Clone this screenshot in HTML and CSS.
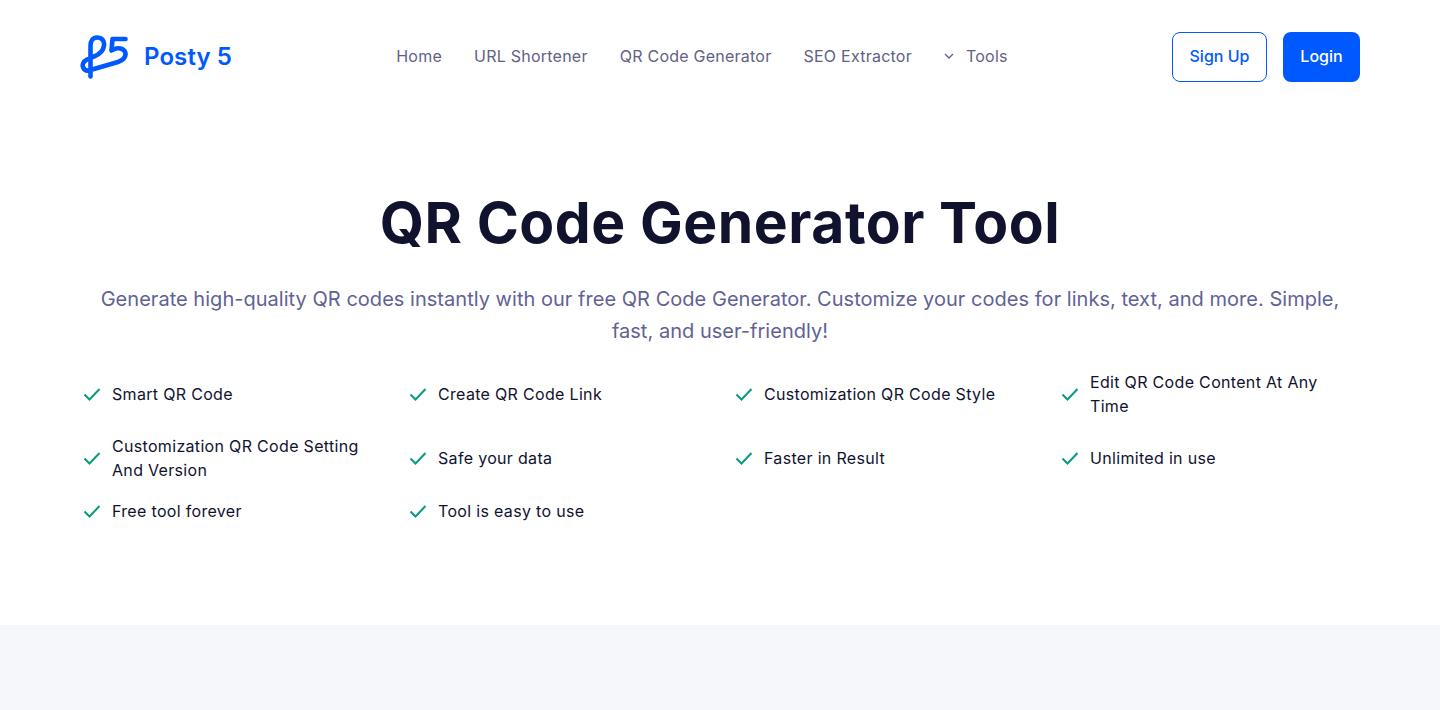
FILE: index.html
```html
<!DOCTYPE html>
<html lang="en">
<head>
    <meta charset="UTF-8">
    <title>QR Code Generator Tool - Posty 5</title>
    <link rel="stylesheet" href="styles.css">
</head>
<body>
    <header class="header">
        <a class="logo" href="#">
            <svg class="logo-mark" width="48" height="44" viewBox="0 0 48 44" fill="none" stroke="#0059ff" stroke-width="4.600" stroke-linecap="round" stroke-linejoin="round">
                <path d="M10.500 41.500V11C10.500 5.500 13 2.500 17 2.500C22 2.500 24.500 6 24 10.500C23.500 16 19 19.500 14 21.500L7 24.500C3 26.500 2 30 3.200 32.500C4.500 35.500 7.500 36 10.500 35L38 27C43.500 25 45.800 22 45.500 18.500C45 14.500 40.500 12.500 36 13.500L31.500 15.500L32.500 4H45.500"/>
            </svg>
            <span class="logo-text">Posty 5</span>
        </a>
        <nav class="nav">
            <a href="#">Home</a>
            <a href="#">URL Shortener</a>
            <a href="#">QR Code Generator</a>
            <a href="#">SEO Extractor</a>
            <a href="#" class="nav-tools">
                <svg width="10" height="6" viewBox="0 0 10 6" fill="none" stroke="#5f6285" stroke-width="1.300"><path d="M1 1l4 4 4-4"/></svg>
                Tools
            </a>
        </nav>
        <div class="actions">
            <a href="#" class="btn btn-outline">Sign Up</a>
            <a href="#" class="btn btn-solid">Login</a>
        </div>
    </header>

    <main class="hero">
        <h1>QR Code Generator Tool</h1>
        <p class="lead">Generate high-quality QR codes instantly with our free QR Code Generator. Customize your codes for links, text, and more. Simple, fast, and user-friendly!</p>
        <ul class="features">
            <li><svg class="check" viewBox="0 0 24 24"><path d="M4.500 12.500l5 5 10-10.500"/></svg><span>Smart QR Code</span></li>
            <li><svg class="check" viewBox="0 0 24 24"><path d="M4.500 12.500l5 5 10-10.500"/></svg><span>Create QR Code Link</span></li>
            <li><svg class="check" viewBox="0 0 24 24"><path d="M4.500 12.500l5 5 10-10.500"/></svg><span>Customization QR Code Style</span></li>
            <li><svg class="check" viewBox="0 0 24 24"><path d="M4.500 12.500l5 5 10-10.500"/></svg><span>Edit QR Code Content At Any Time</span></li>
            <li><svg class="check" viewBox="0 0 24 24"><path d="M4.500 12.500l5 5 10-10.500"/></svg><span>Customization QR Code Setting And Version</span></li>
            <li><svg class="check" viewBox="0 0 24 24"><path d="M4.500 12.500l5 5 10-10.500"/></svg><span>Safe your data</span></li>
            <li><svg class="check" viewBox="0 0 24 24"><path d="M4.500 12.500l5 5 10-10.500"/></svg><span>Faster in Result</span></li>
            <li><svg class="check" viewBox="0 0 24 24"><path d="M4.500 12.500l5 5 10-10.500"/></svg><span>Unlimited in use</span></li>
            <li><svg class="check" viewBox="0 0 24 24"><path d="M4.500 12.500l5 5 10-10.500"/></svg><span>Free tool forever</span></li>
            <li><svg class="check" viewBox="0 0 24 24"><path d="M4.500 12.500l5 5 10-10.500"/></svg><span>Tool is easy to use</span></li>
        </ul>
    </main>

    <section class="band"></section>
</body>
</html>
```

FILE: styles.css
```css
* {
    box-sizing: border-box;
}

html, body {
    height: 100%;
}

body {
    margin: 0;
    font-family: Inter, 'Noto Sans', Arial, sans-serif;
    background-color: #ffffff;
    display: flex;
    flex-direction: column;
    overflow: hidden;
}

a {
    text-decoration: none;
}

.header {
    height: 114px;
    padding: 0 80px;
    display: flex;
    align-items: center;
    justify-content: space-between;
}

.logo {
    display: flex;
    align-items: center;
    gap: 16px;
    width: 152px;
}

.logo-mark {
    flex-shrink: 0;
}

.logo-text {
    padding-bottom: 2px;
    font-size: 24px;
    font-weight: 600;
    letter-spacing: 0.1px;
    white-space: nowrap;
    color: #0059ff;
}

.nav {
    display: flex;
    align-items: center;
    gap: 32px;
    padding-bottom: 2px;
}

.nav a {
    font-size: 16px;
    letter-spacing: 0.24px;
    color: #5f6285;
}

.nav-tools {
    display: flex;
    align-items: center;
    gap: 12px;
}

.actions {
    display: flex;
    gap: 16px;
}

.btn {
    height: 50px;
    padding-bottom: 2px;
    display: flex;
    align-items: center;
    justify-content: center;
    border-radius: 8px;
    font-size: 16px;
    font-weight: 500;
}

.btn-outline {
    width: 95px;
    border: 1px solid #0059ff;
    color: #0059ff;
}

.btn-solid {
    width: 77px;
    background-color: #0059ff;
    color: #ffffff;
}

.hero {
    padding: 0 80px;
    height: 511px;
    text-align: center;
}

h1 {
    margin: 69px 0 0;
    font-size: 57px;
    line-height: 80px;
    font-weight: 650;
    letter-spacing: 0.55px;
    color: #10122e;
}

.lead {
    margin: 20px 0 0;
    font-size: 20px;
    line-height: 32px;
    letter-spacing: 0.03px;
    color: #5f6295;
}

/* 4 columns of 326px, wider than the page padding */
.features {
    list-style: none;
    margin: 23px -24px 0 0;
    padding: 0;
    display: grid;
    grid-template-columns: repeat(4, 1fr);
    gap: 16px 0;
    text-align: left;
}

.features li {
    min-height: 26px;
    display: flex;
    align-items: center;
    gap: 8px;
    padding-right: 30px;
    font-size: 16px;
    line-height: 24px;
    letter-spacing: 0.32px;
    color: #10122e;
}

.check {
    width: 24px;
    height: 24px;
    flex-shrink: 0;
    fill: none;
    stroke: #0b9a80;
    stroke-width: 2;
}

.band {
    flex: 1;
    background-color: #f5f7fb;
}
```
